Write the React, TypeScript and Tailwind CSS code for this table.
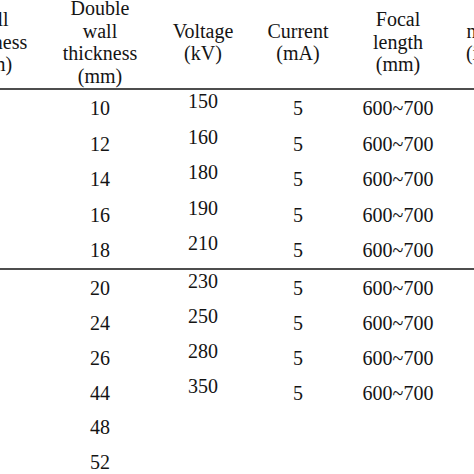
import React from 'react';

const cols = 'grid grid-cols-[110px_110px_96px_94px_106px_92px]';

const header = [
  ['Wall', 'thickness', '(mm)'],
  ['Double', 'wall', 'thickness', '(mm)'],
  ['Voltage', '(kV)'],
  ['Current', '(mA)'],
  ['Focal', 'length', '(mm)'],
  ['number', '(image)'],
];

const groupOne = [
  ['10', '150'],
  ['12', '160'],
  ['14', '180'],
  ['16', '190'],
  ['18', '210'],
];

const groupTwo = [
  ['20', '230'],
  ['24', '250'],
  ['26', '280'],
  ['44', '350'],
  ['48', ''],
  ['52', ''],
];

const Row = ({ wall, kv, tall }: { wall: string; kv: string; tall?: boolean }) => {
  const h = tall ? 'h-[35.5px]' : 'h-[35px]';
  return (
    <div className={`${cols} ${h} leading-[22px]`}>
      <div />
      <div className="flex items-center justify-center">{wall}</div>
      <div className="flex items-center justify-center pb-[14px]">{kv}</div>
      <div className="flex items-center justify-center">{kv ? '5' : ''}</div>
      <div className="flex items-center justify-center">{kv ? '600~700' : ''}</div>
      <div />
    </div>
  );
};

export default function App() {
  return (
    <div
      className="w-[474px] h-[474px] overflow-hidden bg-white text-[20px] text-[#141414]"
      style={{ fontFamily: '"Liberation Serif", "Times New Roman", serif' }}
    >
      <div className="ml-[-65px] w-[608px]">
        {/* header */}
        <div className={`${cols} grid-rows-[88px] h-[88px] leading-[22.5px]`}>
          {header.map((lines, i) => (
            <div key={i} className="flex flex-col items-center justify-center min-h-0 pb-[4px] whitespace-nowrap">
              {lines.map(l => (
                <span key={l}>{l}</span>
              ))}
            </div>
          ))}
        </div>
        <div className="h-[2px] bg-[#4d4d4d]" />

        {groupOne.map(([w, v]) => (
          <Row key={w} wall={w} kv={v} tall />
        ))}
        <div className="h-[2px] bg-[#4d4d4d]" />

        {groupTwo.map(([w, v]) => (
          <Row key={w} wall={w} kv={v} />
        ))}
      </div>
    </div>
  );
}
